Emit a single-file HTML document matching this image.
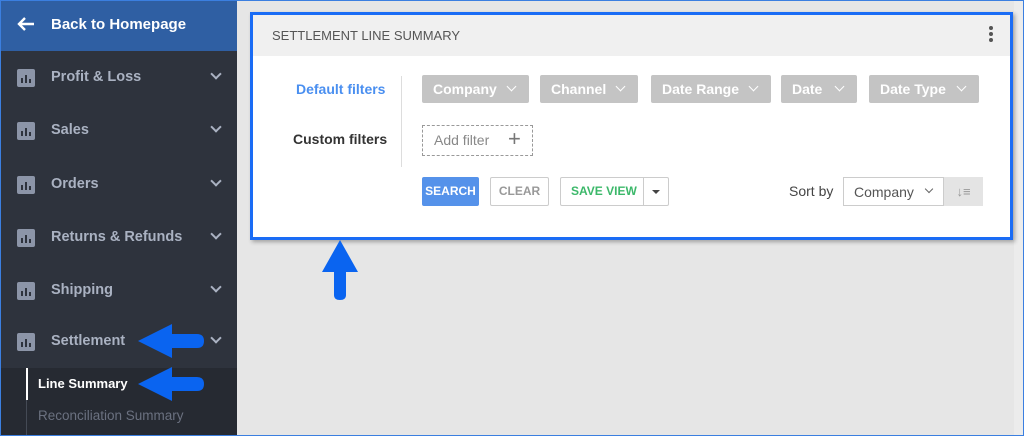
<!DOCTYPE html>
<html><head><style>
*{box-sizing:border-box;margin:0;padding:0}
body{width:1024px;height:436px;overflow:hidden;background:#e6e6e6;font-family:"Liberation Sans",Arial,sans-serif;position:relative}
.frame{position:absolute;inset:0;border:1px solid #3b7fe0;z-index:50;pointer-events:none}
.side{position:absolute;left:0;top:0;width:237px;height:436px;background:#2e333d}
.top{position:absolute;left:0;top:0;width:237px;height:51px;background:#2f5fa3;color:#fff;font-weight:bold;font-size:15px}
.top span{position:absolute;left:51px;top:16px}
.item{position:absolute;left:0;width:237px;height:30px;color:#aab2c2;font-weight:bold;font-size:14.5px}
.item .ic{position:absolute;left:17px;top:6px;width:18px;height:18px;background:#8c95a8;border-radius:2px}
.item .ic i{position:absolute;bottom:4px;width:2px;background:#2e333d}
.item .t{position:absolute;left:51px;top:6px}
.item .ch{position:absolute;left:212px;top:7px;width:8px;height:8px;border-right:2px solid #aab2c2;border-bottom:2px solid #aab2c2;transform:rotate(45deg)}
.sub{position:absolute;left:0;top:368px;width:237px;height:68px;background:#262a32}
.card{position:absolute;left:250px;top:12px;width:763px;height:228px;border:3px solid #1a6cf5;background:#fff;box-shadow:2px 2px 4px rgba(0,0,0,.3)}
.ch2{position:absolute;left:0;top:0;right:0;height:41px;background:#f0f0f0;color:#555;font-size:13px}
.chip{position:absolute;top:60px;height:28px;background:#c4c4c4;color:#fff;font-weight:bold;font-size:14px;border-radius:2px;padding:6px 0 0 11px}
.chip:after{content:"";position:absolute;right:14px;top:8px;width:6px;height:6px;border-right:1.5px solid #fff;border-bottom:1.5px solid #fff;transform:rotate(45deg)}
.btn{position:absolute;top:162px;height:29px;font-size:12px;font-weight:bold;text-align:center;line-height:27px;border:1px solid #ccc;border-radius:2px}
</style></head><body>
<div class="side">
<div class="top"><svg style="position:absolute;left:17px;top:16px" width="18" height="16" viewBox="0 0 18 16"><path d="M17 8H2M8 2L2 8l6 6" stroke="#fff" stroke-width="2.4" fill="none"/></svg><span>Back to Homepage</span></div>
<div class="item" style="top:63px"><div class="ic"><i style="left:4px;height:5px"></i><i style="left:8px;height:8px"></i><i style="left:12px;height:4px"></i></div><span class="t">Profit &amp; Loss</span><div class="ch"></div></div>
<div class="item" style="top:116px"><div class="ic"><i style="left:4px;height:5px"></i><i style="left:8px;height:8px"></i><i style="left:12px;height:4px"></i></div><span class="t">Sales</span><div class="ch"></div></div>
<div class="item" style="top:170px"><div class="ic"><i style="left:4px;height:5px"></i><i style="left:8px;height:8px"></i><i style="left:12px;height:4px"></i></div><span class="t">Orders</span><div class="ch"></div></div>
<div class="item" style="top:223px"><div class="ic"><i style="left:4px;height:5px"></i><i style="left:8px;height:8px"></i><i style="left:12px;height:4px"></i></div><span class="t">Returns &amp; Refunds</span><div class="ch"></div></div>
<div class="item" style="top:276px"><div class="ic"><i style="left:4px;height:5px"></i><i style="left:8px;height:8px"></i><i style="left:12px;height:4px"></i></div><span class="t">Shipping</span><div class="ch"></div></div>
<div class="item" style="top:327px"><div class="ic"><i style="left:4px;height:5px"></i><i style="left:8px;height:8px"></i><i style="left:12px;height:4px"></i></div><span class="t">Settlement</span><div class="ch"></div></div>
<div class="sub">
<div style="position:absolute;left:26px;top:0;width:2px;height:32px;background:#fff"></div>
<div style="position:absolute;left:26px;top:32px;width:1px;height:36px;background:#444a55"></div>
<div style="position:absolute;left:38px;top:8px;color:#fff;font-weight:bold;font-size:13px">Line Summary</div>
<div style="position:absolute;left:38px;top:40px;color:#6b7180;font-size:13.5px">Reconciliation Summary</div>
</div>
</div>
<div style="position:absolute;left:1014px;top:0;width:10px;height:436px;background:#ececec"></div>
<div class="card">
<div class="ch2"><span style="position:absolute;left:19px;top:13px">SETTLEMENT LINE SUMMARY</span>
<svg style="position:absolute;left:735px;top:10px" width="6" height="20"><circle cx="3" cy="3" r="2" fill="#555"/><circle cx="3" cy="9" r="2" fill="#555"/><circle cx="3" cy="15" r="2" fill="#555"/></svg></div>
<div style="position:absolute;left:43px;top:66px;color:#4a8ff0;font-weight:bold;font-size:14px">Default filters</div>
<div style="position:absolute;left:40px;top:116px;color:#333;font-weight:bold;font-size:14px">Custom filters</div>
<div style="position:absolute;left:148px;top:61px;width:1px;height:91px;background:#ddd"></div>
<div class="chip" style="left:169px;width:107px">Company</div>
<div class="chip" style="left:287px;width:98px">Channel</div>
<div class="chip" style="left:398px;width:120px">Date Range</div>
<div class="chip" style="left:528px;width:76px">Date</div>
<div class="chip" style="left:616px;width:110px">Date Type</div>
<div style="position:absolute;left:169px;top:110px;width:111px;height:31px;border:1.5px dashed #999;color:#888;font-size:14px;padding:6px 0 0 11px">Add filter <span style="font-size:22px;position:absolute;left:85px;top:0px;color:#777">+</span></div>
<div class="btn" style="left:169px;width:57px;background:#5592ea;color:#fff;border-color:#5592ea">SEARCH</div>
<div class="btn" style="left:237px;width:59px;color:#999">CLEAR</div>
<div class="btn" style="left:307px;width:109px;color:#3cb86a;text-align:left;padding-left:10px">SAVE VIEW<span style="position:absolute;left:82px;top:-1px;width:1px;height:29px;background:#ccc"></span><span style="position:absolute;left:91px;top:12px;border:4px solid transparent;border-top:4px solid #444"></span></div>
<div style="position:absolute;left:536px;top:168px;color:#444;font-size:14px">Sort by</div>
<div style="position:absolute;left:590px;top:162px;width:101px;height:29px;border:1px solid #ccc;color:#555;font-size:14px;padding:6px 0 0 10px">Company<span style="position:absolute;left:82px;top:8px;width:6px;height:6px;border-right:1.5px solid #666;border-bottom:1.5px solid #666;transform:rotate(45deg)"></span></div>
<div style="position:absolute;left:691px;top:162px;width:39px;height:29px;background:#e4e4e4;color:#999;font-size:13px;text-align:center;line-height:29px">↓≡</div>
</div>
<svg style="position:absolute;left:0;top:0" width="1024" height="436">
<g fill="#0a64f0">
<path d="M138 341L172 324V334H197Q204 334 204 341Q204 348 197 348H172V358Z"/>
<path d="M138 384L172 367V377H197Q204 377 204 384Q204 391 197 391H172V401Z"/>
<path d="M340 240L358 272H346V295Q346 300 340 300Q334 300 334 295V272H322Z"/>
</g></svg>
<div class="frame"></div>
</body></html>
